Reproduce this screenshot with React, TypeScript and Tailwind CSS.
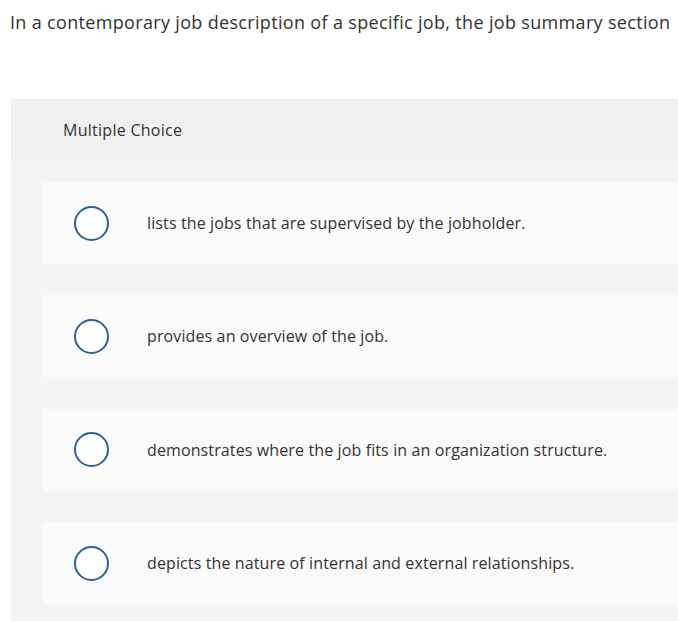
import React from "react";

const options = [
  "lists the jobs that are supervised by the jobholder.",
  "provides an overview of the job.",
  "demonstrates where the job fits in an organization structure.",
  "depicts the nature of internal and external relationships.",
];

export default function App() {
  return (
    <div
      className="w-[678px] h-[621px] overflow-hidden bg-white text-[#333333]"
      style={{ fontFamily: '"Open Sans", "Liberation Sans", sans-serif' }}
    >
      <div className="pl-[10px] pt-[9px] h-[99px] text-[18px] leading-[26px] whitespace-nowrap tracking-[0.33px]">
        In a contemporary job description of a specific job, the job summary section
      </div>
      <div className="ml-[11px] bg-[#f4f4f4] h-[522px]">
        <div className="h-[62px] bg-[#f0f0f0] pl-[52px] flex items-center text-[16px] tracking-[0.27px]">
          Multiple Choice
        </div>
        <div className="pl-[32px] pt-[21px] flex flex-col gap-[31.4px]">
          {options.map((o) => (
            <div key={o} className="h-[82px] bg-[#fafafa] flex items-center pl-[31px]">
              <div className="w-[35px] h-[35px] rounded-full border-2 border-[#2b6199] bg-white shrink-0" />
              <div className="ml-[38px] text-[16px] tracking-[0.12px] whitespace-nowrap">{o}</div>
            </div>
          ))}
        </div>
      </div>
    </div>
  );
}
